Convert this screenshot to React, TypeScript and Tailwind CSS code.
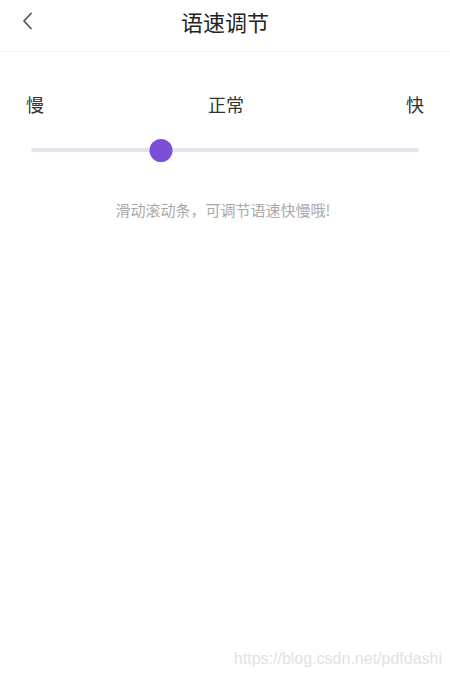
import { useState } from "react";

// Speech-rate settings page: header, slow/normal/fast labels, a slider and a hint.
export default function App() {
  const [value] = useState(33.6);

  return (
    <div
      className="relative flex h-[677px] w-[450px] flex-col overflow-hidden bg-white"
      style={{ fontFamily: '"Noto Sans CJK SC", "Noto Sans", sans-serif' }}
    >
      {/* Header */}
      <div className="relative flex h-[52px] items-center justify-center border-b border-[#f2f2f2]">
        <button className="absolute left-[20px] top-[11px] flex h-[20px] w-[16px] items-center justify-center">
          <svg width="12" height="18" viewBox="0 0 12 18" fill="none">
            <path d="M9 1.5 2 9l7 7.5" stroke="#555" strokeWidth="1.8" strokeLinecap="round" strokeLinejoin="round" />
          </svg>
        </button>
        <h1 className="-mt-[10px] text-[22px] leading-none text-[#222]">语速调节</h1>
      </div>

      {/* Labels */}
      <div className="mt-[40px] flex items-center justify-between px-[26px] text-[18px] leading-[24px] text-[#333]">
        <span>慢</span>
        <span className="pl-[2px]">正常</span>
        <span>快</span>
      </div>

      {/* Slider */}
      <div className="mt-[22px] px-[31px]">
        <div className="relative h-[24px]">
          <div className="absolute left-0 right-0 top-[10px] h-[4px] rounded-full bg-[#e6e2ef]" />
          <div
            className="absolute top-[0.5px] h-[23px] w-[23px] -translate-x-1/2 rounded-full bg-[#7b4fd8]"
            style={{ left: `${value}%` }}
          />
        </div>
      </div>

      {/* Hint */}
      <p className="mt-[38px] pr-[4px] text-center text-[15px] leading-[20px] text-[#a9a9a9]">
        滑动滚动条，可调节语速快慢哦!
      </p>

      {/* Watermark */}
      <span
        className="absolute bottom-[6px] right-[8px] text-[16px] text-[#e2e2e2]"
        style={{ fontFamily: '"Liberation Sans", Arial, sans-serif' }}
      >
        https://blog.csdn.net/pdfdashi
      </span>
    </div>
  );
}
